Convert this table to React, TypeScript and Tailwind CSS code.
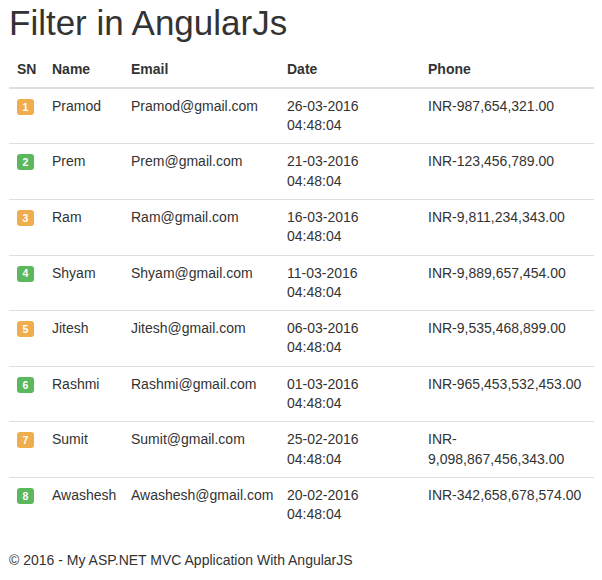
import React from "react";

type Row = {
  sn: number;
  name: string;
  email: string;
  date: string;
  phone: string[];
};

const rows: Row[] = [
  { sn: 1, name: "Pramod", email: "Pramod@gmail.com", date: "26-03-2016", phone: ["INR-987,654,321.00"] },
  { sn: 2, name: "Prem", email: "Prem@gmail.com", date: "21-03-2016", phone: ["INR-123,456,789.00"] },
  { sn: 3, name: "Ram", email: "Ram@gmail.com", date: "16-03-2016", phone: ["INR-9,811,234,343.00"] },
  { sn: 4, name: "Shyam", email: "Shyam@gmail.com", date: "11-03-2016", phone: ["INR-9,889,657,454.00"] },
  { sn: 5, name: "Jitesh", email: "Jitesh@gmail.com", date: "06-03-2016", phone: ["INR-9,535,468,899.00"] },
  { sn: 6, name: "Rashmi", email: "Rashmi@gmail.com", date: "01-03-2016", phone: ["INR-965,453,532,453.00"] },
  { sn: 7, name: "Sumit", email: "Sumit@gmail.com", date: "25-02-2016", phone: ["INR-", "9,098,867,456,343.00"] },
  { sn: 8, name: "Awashesh", email: "Awashesh@gmail.com", date: "20-02-2016", phone: ["INR-342,658,678,574.00"] },
];

export default function App() {
  return (
    <div className="pl-[9px] pr-[8px] font-['Liberation_Sans',Arial,sans-serif] text-[14px] leading-[19.3px] text-[#333] bg-white min-h-[580px]">
      <h1 className="mt-[4px] mb-[9px] text-[35px] leading-[38.5px] font-normal text-[#333]">Filter in AngularJs</h1>
      <table className="w-full table-fixed border-collapse">
        <colgroup>
          <col className="w-[35px]" />
          <col className="w-[79px]" />
          <col className="w-[156px]" />
          <col className="w-[141px]" />
          <col className="w-[174px]" />
        </colgroup>
        <thead>
          <tr>
            {["SN", "Name", "Email", "Date", "Phone"].map((h) => (
              <th key={h} className="px-2 py-2 text-left align-bottom font-bold border-b-2 border-[#ddd]">
                {h}
              </th>
            ))}
          </tr>
        </thead>
        <tbody>
          {rows.map((r, i) => {
            const td = i === 0 ? "px-2 py-2 align-top" : "px-2 py-2 align-top border-t border-[#ddd]";
            return (
              <tr key={r.sn}>
                <td className={td}>
                  <span
                    className={
                      r.sn % 2 === 1
                        ? "mt-[2px] flex h-[16px] w-[17px] items-center justify-center rounded-[3px] bg-[#f0ad4e] text-[10.5px] font-bold leading-none text-white"
                        : "mt-[2px] flex h-[16px] w-[17px] items-center justify-center rounded-[3px] bg-[#5cb85c] text-[10.5px] font-bold leading-none text-white"
                    }
                  >
                    {r.sn}
                  </span>
                </td>
                <td className={td}>{r.name}</td>
                <td className={td}>{r.email}</td>
                <td className={td}>
                  <div>{r.date}</div>
                  <div>04:48:04</div>
                </td>
                <td className={td}>
                  {r.phone.map((p) => (
                    <div key={p}>{p}</div>
                  ))}
                </td>
              </tr>
            );
          })}
        </tbody>
      </table>
      <p className="mt-[18px]">© 2016 - My ASP.NET MVC Application With AngularJS</p>
    </div>
  );
}
